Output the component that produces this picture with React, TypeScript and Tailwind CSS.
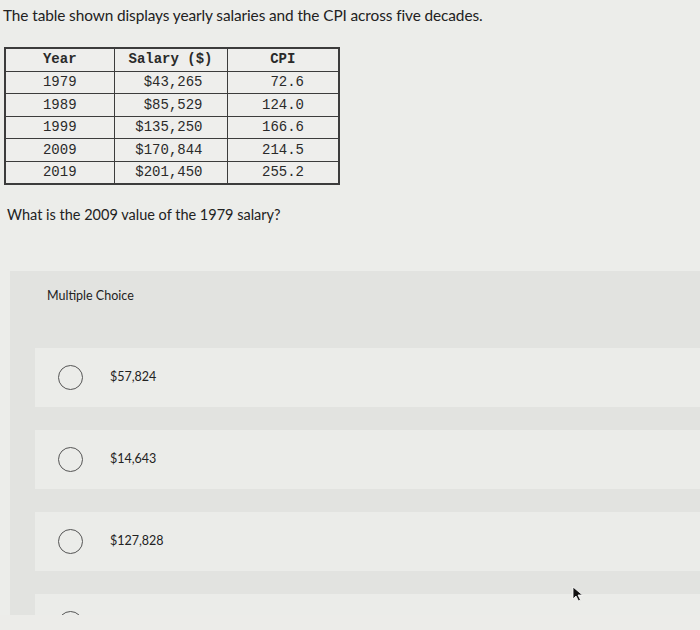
import React from 'react';

const rows = [
  ['1979', '$43,265', '72.6'],
  ['1989', '$85,529', '124.0'],
  ['1999', '$135,250', '166.6'],
  ['2009', '$170,844', '214.5'],
  ['2019', '$201,450', '255.2'],
];

const choices = ['$57,824', '$14,643', '$127,828', ''];

const App = () => {
  return (
    <div className="relative w-[700px] h-[630px] overflow-hidden bg-[#ecedea] font-['Lato',sans-serif] text-[#222]">
      <p className="pl-[3px] pt-[6px] text-[15.4px] leading-[18px] tracking-[-0.1px]">
        The table shown displays yearly salaries and the CPI across five decades.
      </p>

      {/* salary / CPI table */}
      <table className="mt-[23px] ml-[4px] w-[336px] border-collapse border-2 border-[#3c3c3c] bg-[#eeeeec] font-['Liberation_Mono',monospace] text-[14px] text-[#2a2a2a]">
        <thead>
          <tr className="h-[23px]">
            <th className="w-[109px] border-[1.5px] border-[#3c3c3c] text-center font-bold">Year</th>
            <th className="w-[113px] border-[1.5px] border-[#3c3c3c] text-center font-bold">Salary ($)</th>
            <th className="border-[1.5px] border-[#3c3c3c] text-center font-bold">CPI</th>
          </tr>
        </thead>
        <tbody>
          {rows.map((r) => (
            <tr key={r[0]} className="h-[22.5px]">
              <td className="border-[1.5px] border-[#3c3c3c] text-center leading-none">{r[0]}</td>
              <td className="border-[1.5px] border-[#3c3c3c] pr-[24px] text-right leading-none">{r[1]}</td>
              <td className="border-[1.5px] border-[#3c3c3c] pr-[34px] text-right leading-none">{r[2]}</td>
            </tr>
          ))}
        </tbody>
      </table>

      <p className="mt-[21px] pl-[7px] text-[14.5px] leading-[18px]">What is the 2009 value of the 1979 salary?</p>

      {/* multiple choice panel */}
      <div className="mt-[47px] ml-[10px] bg-[#e2e3e0] pl-[25px] pt-[17px]">
        <div className="pl-[12px] text-[12.5px] leading-[16px]">Multiple Choice</div>
        <div className="mt-[44px] flex flex-col gap-[23px]">
          {choices.map((c, i) => (
            <div key={i} className="flex h-[59px] items-center bg-[#ebece9]">
              <span className="ml-[23px] h-[25px] w-[25px] rounded-full border-[1.5px] border-[#555]" />
              <span className="ml-[27px] text-[12.5px] text-[#222]">{c}</span>
            </div>
          ))}
        </div>
      </div>

      {/* bottom strip of page */}
      <div className="absolute bottom-0 left-0 h-[15px] w-full bg-[#ecece9]" />

      {/* mouse cursor */}
      <svg className="absolute left-[572px] top-[586px]" width="12" height="16" viewBox="0 0 12 16">
        <path d="M1 1 L1 13 L4 10 L6.5 15 L8.5 14 L6 9 L10.5 9 Z" fill="#111" stroke="#fff" strokeWidth="0.8" />
      </svg>
    </div>
  );
};

export default App;
